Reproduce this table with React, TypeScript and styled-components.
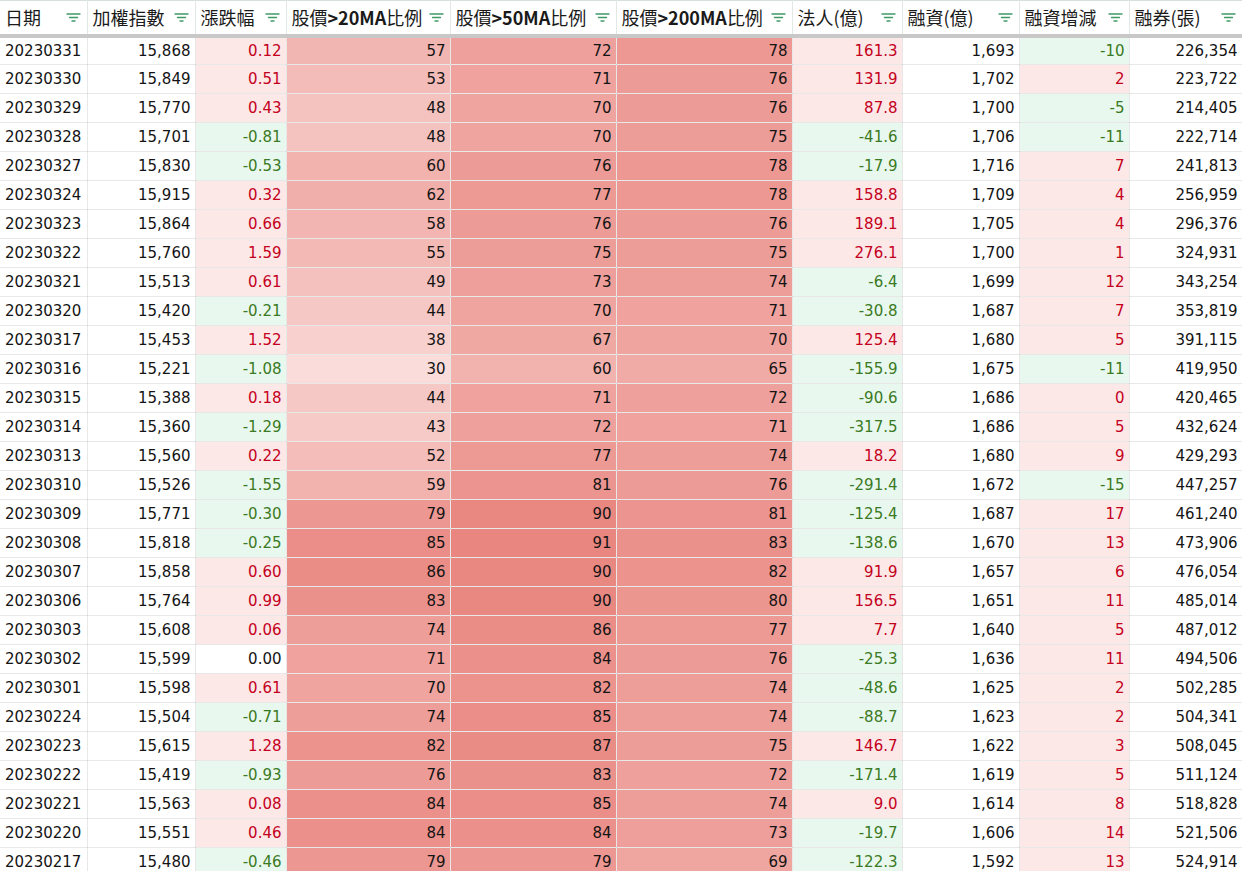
import styled, { createGlobalStyle } from "styled-components";

const GlobalStyle = createGlobalStyle`
  html, body {
    margin: 0;
    padding: 0;
    background: #ffffff;
    overflow: hidden;
  }
  body {
    font-family: "DejaVu Sans", "Noto Sans CJK TC", sans-serif;
  }
`;

type Row = [string, string, string, number, number, number, string, string, string, string];

const rows: Row[] = [
  ["20230331", "15,868", "0.12", 57, 72, 78, "161.3", "1,693", "-10", "226,354"],
  ["20230330", "15,849", "0.51", 53, 71, 76, "131.9", "1,702", "2", "223,722"],
  ["20230329", "15,770", "0.43", 48, 70, 76, "87.8", "1,700", "-5", "214,405"],
  ["20230328", "15,701", "-0.81", 48, 70, 75, "-41.6", "1,706", "-11", "222,714"],
  ["20230327", "15,830", "-0.53", 60, 76, 78, "-17.9", "1,716", "7", "241,813"],
  ["20230324", "15,915", "0.32", 62, 77, 78, "158.8", "1,709", "4", "256,959"],
  ["20230323", "15,864", "0.66", 58, 76, 76, "189.1", "1,705", "4", "296,376"],
  ["20230322", "15,760", "1.59", 55, 75, 75, "276.1", "1,700", "1", "324,931"],
  ["20230321", "15,513", "0.61", 49, 73, 74, "-6.4", "1,699", "12", "343,254"],
  ["20230320", "15,420", "-0.21", 44, 70, 71, "-30.8", "1,687", "7", "353,819"],
  ["20230317", "15,453", "1.52", 38, 67, 70, "125.4", "1,680", "5", "391,115"],
  ["20230316", "15,221", "-1.08", 30, 60, 65, "-155.9", "1,675", "-11", "419,950"],
  ["20230315", "15,388", "0.18", 44, 71, 72, "-90.6", "1,686", "0", "420,465"],
  ["20230314", "15,360", "-1.29", 43, 72, 71, "-317.5", "1,686", "5", "432,624"],
  ["20230313", "15,560", "0.22", 52, 77, 74, "18.2", "1,680", "9", "429,293"],
  ["20230310", "15,526", "-1.55", 59, 81, 76, "-291.4", "1,672", "-15", "447,257"],
  ["20230309", "15,771", "-0.30", 79, 90, 81, "-125.4", "1,687", "17", "461,240"],
  ["20230308", "15,818", "-0.25", 85, 91, 83, "-138.6", "1,670", "13", "473,906"],
  ["20230307", "15,858", "0.60", 86, 90, 82, "91.9", "1,657", "6", "476,054"],
  ["20230306", "15,764", "0.99", 83, 90, 80, "156.5", "1,651", "11", "485,014"],
  ["20230303", "15,608", "0.06", 74, 86, 77, "7.7", "1,640", "5", "487,012"],
  ["20230302", "15,599", "0.00", 71, 84, 76, "-25.3", "1,636", "11", "494,506"],
  ["20230301", "15,598", "0.61", 70, 82, 74, "-48.6", "1,625", "2", "502,285"],
  ["20230224", "15,504", "-0.71", 74, 85, 74, "-88.7", "1,623", "2", "504,341"],
  ["20230223", "15,615", "1.28", 82, 87, 75, "146.7", "1,622", "3", "508,045"],
  ["20230222", "15,419", "-0.93", 76, 83, 72, "-171.4", "1,619", "5", "511,124"],
  ["20230221", "15,563", "0.08", 84, 85, 74, "9.0", "1,614", "8", "518,828"],
  ["20230220", "15,551", "0.46", 84, 84, 73, "-19.7", "1,606", "14", "521,506"],
  ["20230217", "15,480", "-0.46", 79, 79, 69, "-122.3", "1,592", "13", "524,914"],
];

const widths = [87, 108, 91, 164, 166, 176, 110, 117, 110, 113];

type Tone = "none" | "up" | "down";

const toneOf = (s: string, zeroIsUp = false): Tone => {
  const n = parseFloat(s);
  if (n > 0) return "up";
  if (n < 0) return "down";
  return zeroIsUp ? "up" : "none";
};

// red colour scale for the MA ratio columns
const heat = (v: number) => {
  const t = Math.max(0, Math.min(1, (v - 30) / 61));
  const r = Math.round(250 - t * 17);
  const g = Math.round(220 - t * 86);
  const b = Math.round(218 - t * 90);
  return `rgb(${r}, ${g}, ${b})`;
};

const Sheet = styled.table`
  border-collapse: collapse;
  table-layout: fixed;
  width: 1242px;
  border-top: 1px solid #d5e2da;
`;

const HeadRow = styled.tr`
  height: 35px;
  border-bottom: 4px solid #c8c8c8;
`;

const HeadCell = styled.th`
  padding: 0 6px 0 5px;
  border-right: 1px solid #e2e8e4;
  background: #ffffff;
  font-family: "Noto Sans CJK TC", sans-serif;
  font-weight: 400;
  font-size: 18px;
  color: #1a1a1a;
  text-align: left;
  white-space: nowrap;
  overflow: hidden;
`;

const HeadInner = styled.div`
  display: flex;
  align-items: center;
  justify-content: space-between;
`;

const Strong = styled.span`
  font-weight: 700;
`;

const FilterIcon = () => (
  <svg width="15" height="11" viewBox="0 0 15 11">
    <g stroke="#3f9a66" strokeWidth="1.4" strokeLinecap="round">
      <line x1="1" y1="2" x2="14" y2="2" />
      <line x1="3.5" y1="5.5" x2="11.5" y2="5.5" />
      <line x1="6" y1="9" x2="9" y2="9" />
    </g>
  </svg>
);

const BodyRow = styled.tr`
  height: 29px;
`;

const Cell = styled.td<{ $tone?: Tone; $left?: boolean }>`
  padding: 0 4px 0 5px;
  border-right: 1px solid rgba(0, 0, 0, 0.09);
  border-bottom: 1px solid rgba(0, 0, 0, 0.09);
  font-size: 15px;
  text-align: ${({ $left }) => ($left ? "left" : "right")};
  white-space: nowrap;
  overflow: hidden;
  color: ${({ $tone }) =>
    $tone === "up" ? "#c4001c" : $tone === "down" ? "#3b7a24" : "#141414"};
  background: ${({ $tone }) =>
    $tone === "up" ? "#fde8e8" : $tone === "down" ? "#e9f8ee" : "#ffffff"};
`;

const HeatCell = styled(Cell)`
  color: #141414;
`;

const headers: React.ReactNode[] = [
  "日期",
  "加權指數",
  "漲跌幅",
  <>股價<Strong>&gt;20MA</Strong>比例</>,
  <>股價<Strong>&gt;50MA</Strong>比例</>,
  <>股價<Strong>&gt;200MA</Strong>比例</>,
  "法人(億)",
  "融資(億)",
  "融資增減",
  "融券(張)",
];

export default function App() {
  return (
    <>
      <GlobalStyle />
      <Sheet>
        <colgroup>
          {widths.map((w, i) => (
            <col key={i} style={{ width: w }} />
          ))}
        </colgroup>
        <thead>
          <HeadRow>
            {headers.map((h, i) => (
              <HeadCell key={i}>
                <HeadInner>
                  <span>{h}</span>
                  <FilterIcon />
                </HeadInner>
              </HeadCell>
            ))}
          </HeadRow>
        </thead>
        <tbody>
          {rows.map((r) => (
            <BodyRow key={r[0]}>
              <Cell $left>{r[0]}</Cell>
              <Cell>{r[1]}</Cell>
              <Cell $tone={toneOf(r[2])}>{r[2]}</Cell>
              <HeatCell style={{ background: heat(r[3]) }}>{r[3]}</HeatCell>
              <HeatCell style={{ background: heat(r[4]) }}>{r[4]}</HeatCell>
              <HeatCell style={{ background: heat(r[5]) }}>{r[5]}</HeatCell>
              <Cell $tone={toneOf(r[6])}>{r[6]}</Cell>
              <Cell>{r[7]}</Cell>
              <Cell $tone={toneOf(r[8], true)}>{r[8]}</Cell>
              <Cell>{r[9]}</Cell>
            </BodyRow>
          ))}
        </tbody>
      </Sheet>
    </>
  );
}
